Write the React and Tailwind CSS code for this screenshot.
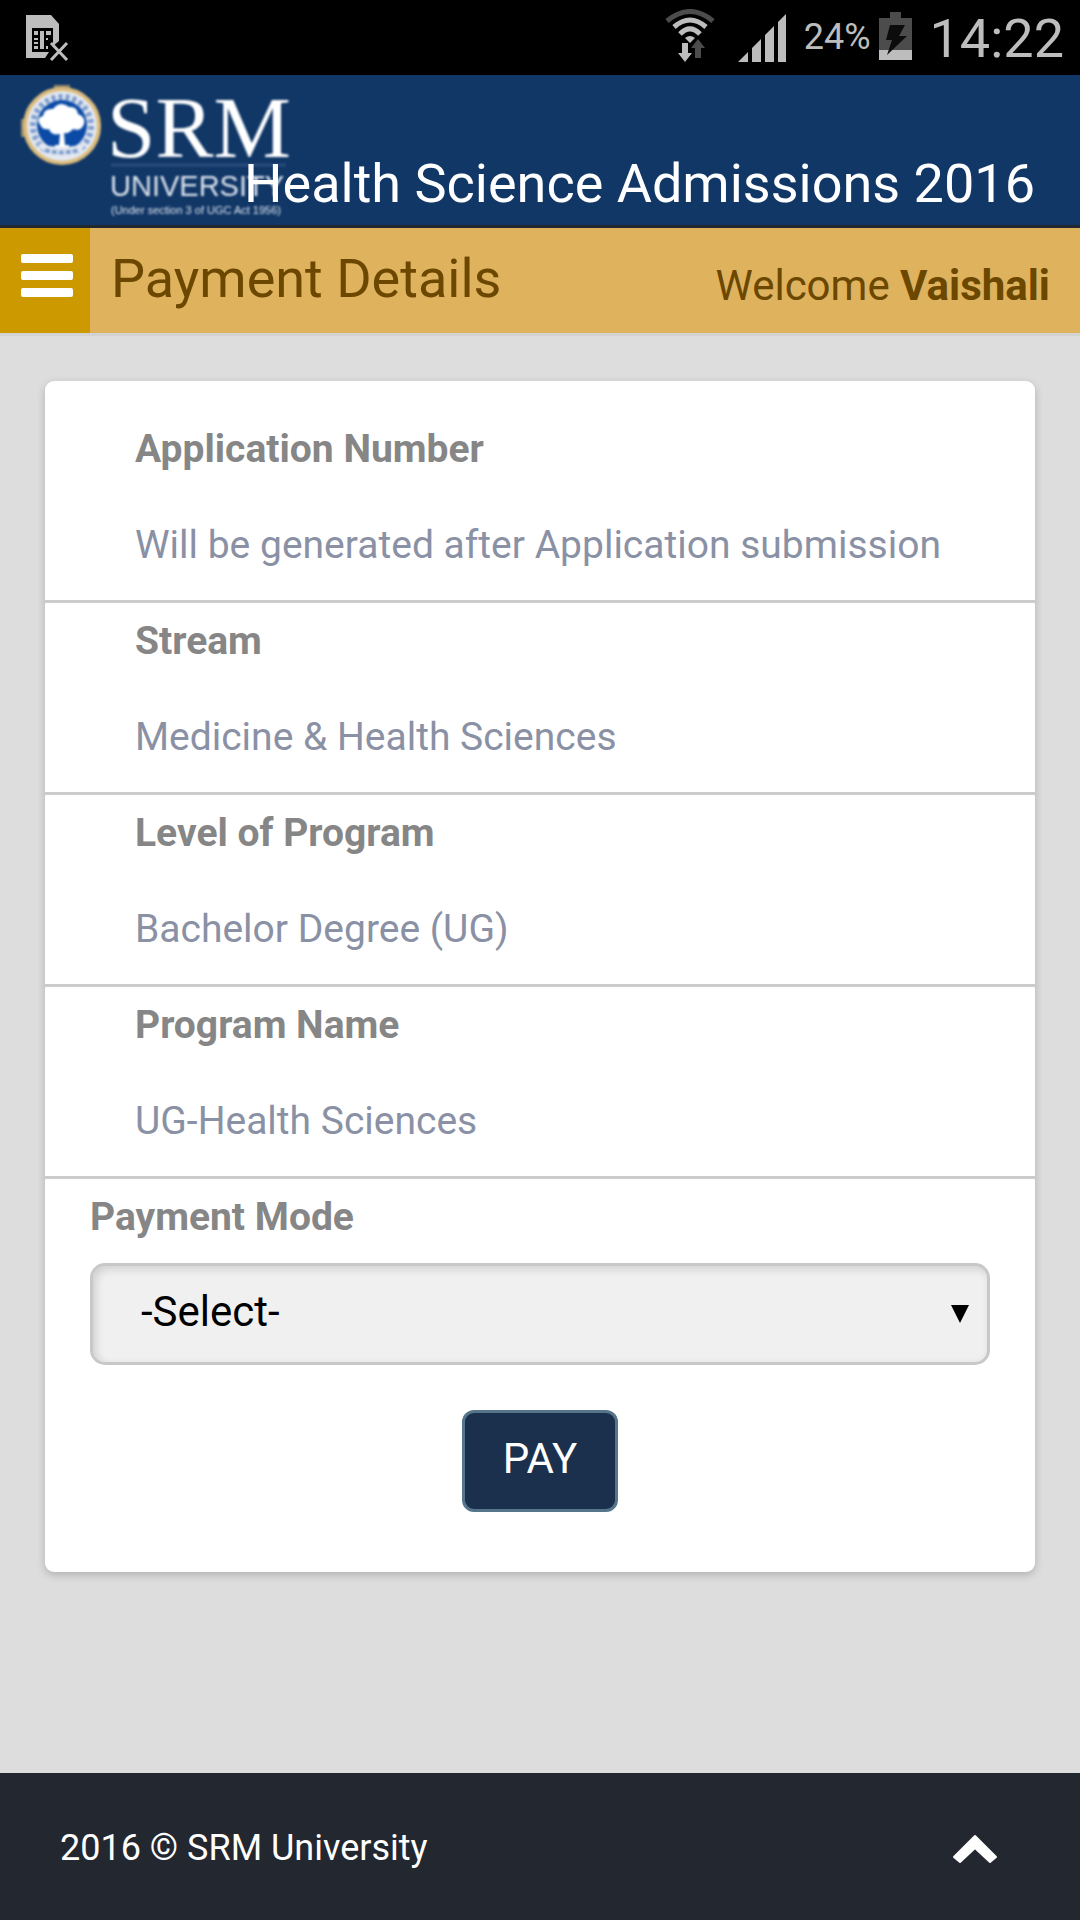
const details = [
  ["Application Number", "Will be generated after Application submission"],
  ["Stream", "Medicine & Health Sciences"],
  ["Level of Program", "Bachelor Degree (UG)"],
  ["Program Name", "UG-Health Sciences"],
];

function SimIcon() {
  return (
    <svg width="44" height="48" viewBox="0 0 44 48" aria-hidden="true">
      <path d="M1 1H26L34 10V27L28 32V14H7V38H24L20 44H1Z" fill="#bdbdbd" />
      <path
        d="M9 17H13V21H9ZM9 24H13V26H9ZM9 28H13V30H9ZM9 32H13V35H9ZM15 17H19V35H15ZM21 17H26V21H21ZM21 24H23V26H21ZM21 32H23V35H21Z"
        fill="#bdbdbd"
      />
      <path d="M26 29L42 46M42 29L26 46" stroke="#bdbdbd" strokeWidth="3" />
    </svg>
  );
}

function WifiIcon() {
  return (
    <svg width="50" height="54" viewBox="0 0 50 54" aria-hidden="true">
      <g fill="none" strokeWidth="5">
        <path d="M2 12Q25 -7 48 12" stroke="#4c4c4c" />
        <path d="M9 18Q25 4 41 18" stroke="#bdbdbd" />
        <path d="M15 25Q25 15 35 25" stroke="#bdbdbd" />
      </g>
      <path d="M20 29Q25 25 30 29L25 34Z" fill="#bdbdbd" />
      <path d="M17 34H23V44H27L20 53L13 44H17Z" fill="#bdbdbd" />
      <path d="M33 30L40 39H36V49H30V39H26Z" fill="#4c4c4c" />
    </svg>
  );
}

function SignalIcon() {
  return (
    <svg width="48" height="48" viewBox="0 0 48 48" fill="#bdbdbd" aria-hidden="true">
      <path d="M0 48L10 38V48ZM14 34L23 25V48H14ZM27 21L36 12V48H27ZM40 8L48 0V48H40Z" />
    </svg>
  );
}

function BatteryIcon() {
  return (
    <svg width="33" height="48" viewBox="0 0 33 48" aria-hidden="true">
      <path d="M0 6H11V0H22V6H33V48H0Z" fill="#4c4c4c" />
      <path d="M0 38H33V48H0Z" fill="#bdbdbd" />
      <path d="M11 13H26L20 24H28L8 43L13 28H7Z" fill="#0c0c0c" />
    </svg>
  );
}

function Logo() {
  return (
    <svg
      width="280"
      height="138"
      viewBox="0 0 280 138"
      role="img"
      aria-label="SRM University"
      className="shrink-0 blur-[1px]"
    >
      <path d="M34 2H50V8H34ZM1 36H7V54H1Z" fill="#96886a" />
      <circle cx="42" cy="43" r="37" fill="#e4e8f0" stroke="#dcbc7c" strokeWidth="4" />
      <circle
        cx="42"
        cy="43"
        r="29"
        fill="none"
        stroke="#7f9fd0"
        strokeWidth="6"
        strokeDasharray="4 3"
        pathLength="182"
      />
      <circle cx="42" cy="42" r="25" fill="#0b4ba6" />
      <path
        d="M21 43Q15 35 23 33Q24 25 33 26Q40 17 49 24Q57 23 58 31Q66 34 64 41Q61 49 53 46Q49 51 44 50L45 62H49V67H35V62H39L40 51Q31 53 29 46Q23 47 21 43Z"
        fill="#fff"
      />
      <path d="M18 60Q42 68 66 60Q58 76 42 76Q26 76 18 60Z" fill="#e4e8f0" />
      <path d="M25 67Q42 72 59 67" fill="none" stroke="#7f9fd0" strokeWidth="4" strokeDasharray="5 2" />
      <path d="M91 82H266" stroke="#2b4c7b" strokeWidth="3" />
      <g fill="#fff">
        <text x="87" y="74" fontFamily="'Liberation Serif', serif" fontSize="87">SRM</text>
        <text x="90" y="113" fontFamily="'Liberation Sans', sans-serif" fontSize="29" fill="#dbe2ec">UNIVERSITY</text>
        <text x="91" y="131" fontFamily="'Liberation Sans', sans-serif" fontSize="11" fill="#dbe2ec">(Under section 3 of UGC Act 1956)</text>
      </g>
    </svg>
  );
}

export default function App() {
  return (
    <div className="flex min-h-screen flex-col bg-[#ddd] font-[Roboto,sans-serif]">
      <div className="flex h-[75px] items-center justify-between bg-black pr-4 pl-[25px] text-[#bdbdbd]">
        <SimIcon />
        <div className="flex items-center">
          <span className="pb-1"><WifiIcon /></span>
          <div className="ml-[23px] flex items-center">
            <SignalIcon />
            <span className="ml-[18px] text-[36px] leading-[75px]">24%</span>
            <span className="ml-2 pb-1"><BatteryIcon /></span>
          </div>
          <span className="ml-[18px] pt-px text-[54px] leading-[75px]">14:22</span>
        </div>
      </div>

      <header className="relative flex h-[153px] items-start justify-between border-b-[3px] border-[#23272f] bg-[#113767] pt-2 pl-5">
        <Logo />
        <h1 className="absolute right-[45px] bottom-1 text-[54px] leading-[75px] whitespace-nowrap text-white">
          Health Science Admissions 2016
        </h1>
      </header>

      <div className="flex h-[108px] items-center justify-between border-b-[3px] border-[#d2d2d2] bg-[#dfb25e] pr-[30px] text-[#6b4700]">
        <div className="flex h-full items-center">
          <button
            type="button"
            aria-label="Menu"
            className="flex h-full w-[90px] flex-col items-center justify-center gap-2 bg-[#cc9900] pb-2.5 pl-1"
          >
            <span className="h-[9px] w-[52px] rounded-xs bg-white" />
            <span className="h-[9px] w-[52px] rounded-xs bg-white" />
            <span className="h-[9px] w-[52px] rounded-xs bg-white" />
          </button>
          <h2 className="ml-[21px] pb-1 text-[54px] leading-[75px]">Payment Details</h2>
        </div>
        <p className="pt-2.5 text-[42px] leading-[60px]">
          Welcome <b className="font-bold">Vaishali</b>
        </p>
      </div>

      <main className="flex-1 px-[45px] pt-[45px] pb-[45px]">
        <form className="rounded-[9px] bg-white pt-[30px] pb-[60px] text-[39px] leading-[77px] shadow-[0_3px_9px_rgba(0,0,0,0.2)]">
          <dl>
            {details.map(([label, value]) => (
              <div key={label} className="border-b-[3px] border-[#ccc] px-[90px] pb-4">
                <dt className="font-bold text-[#868686]">{label}</dt>
                <dd className="mt-[19px] text-[#8a91a5]">{value}</dd>
              </div>
            ))}
          </dl>
          <div className="px-[45px]">
            <label htmlFor="mode" className="block font-bold text-[#868686]">
              Payment Mode
            </label>
            <div className="relative mt-[7px]">
              <select
                id="mode"
                className="block h-[102px] w-full appearance-none rounded-[15px] border-[3px] border-[#c8c8c8] bg-[#f0f0f0] px-[48px] pb-1.5 text-[42px] text-black shadow-[inset_3px_3px_9px_rgba(0,0,0,0.14)]"
              >
                <option>-Select-</option>
              </select>
              <svg
                width="18"
                height="18"
                viewBox="0 0 18 18"
                aria-hidden="true"
                className="pointer-events-none absolute top-[42px] right-[21px]"
              >
                <path d="M0 0H18L9 18Z" />
              </svg>
            </div>
          </div>
          <div className="mt-[45px] flex justify-center">
            <button
              type="button"
              className="h-[102px] w-[156px] rounded-[12px] border-[3px] border-[#56758a] bg-[#1a304c] pb-1 text-[42px] leading-[60px] text-white"
            >
              PAY
            </button>
          </div>
        </form>
      </main>

      <footer className="flex h-[147px] items-center justify-between bg-[#23272f] pr-[82px] pl-[60px] text-white">
        <p className="pt-0.5 text-[36px] leading-[60px]">2016 © SRM University</p>
        <a href="#root" aria-label="Back to top" className="pt-1">
          <svg width="46" height="30" viewBox="0 0 46 30" aria-hidden="true">
            <path d="M23 2L44 23L38 28L23 14L8 28L2 23Z" fill="#fff" stroke="#fff" strokeWidth="2" strokeLinejoin="round" />
          </svg>
        </a>
      </footer>
    </div>
  );
}
